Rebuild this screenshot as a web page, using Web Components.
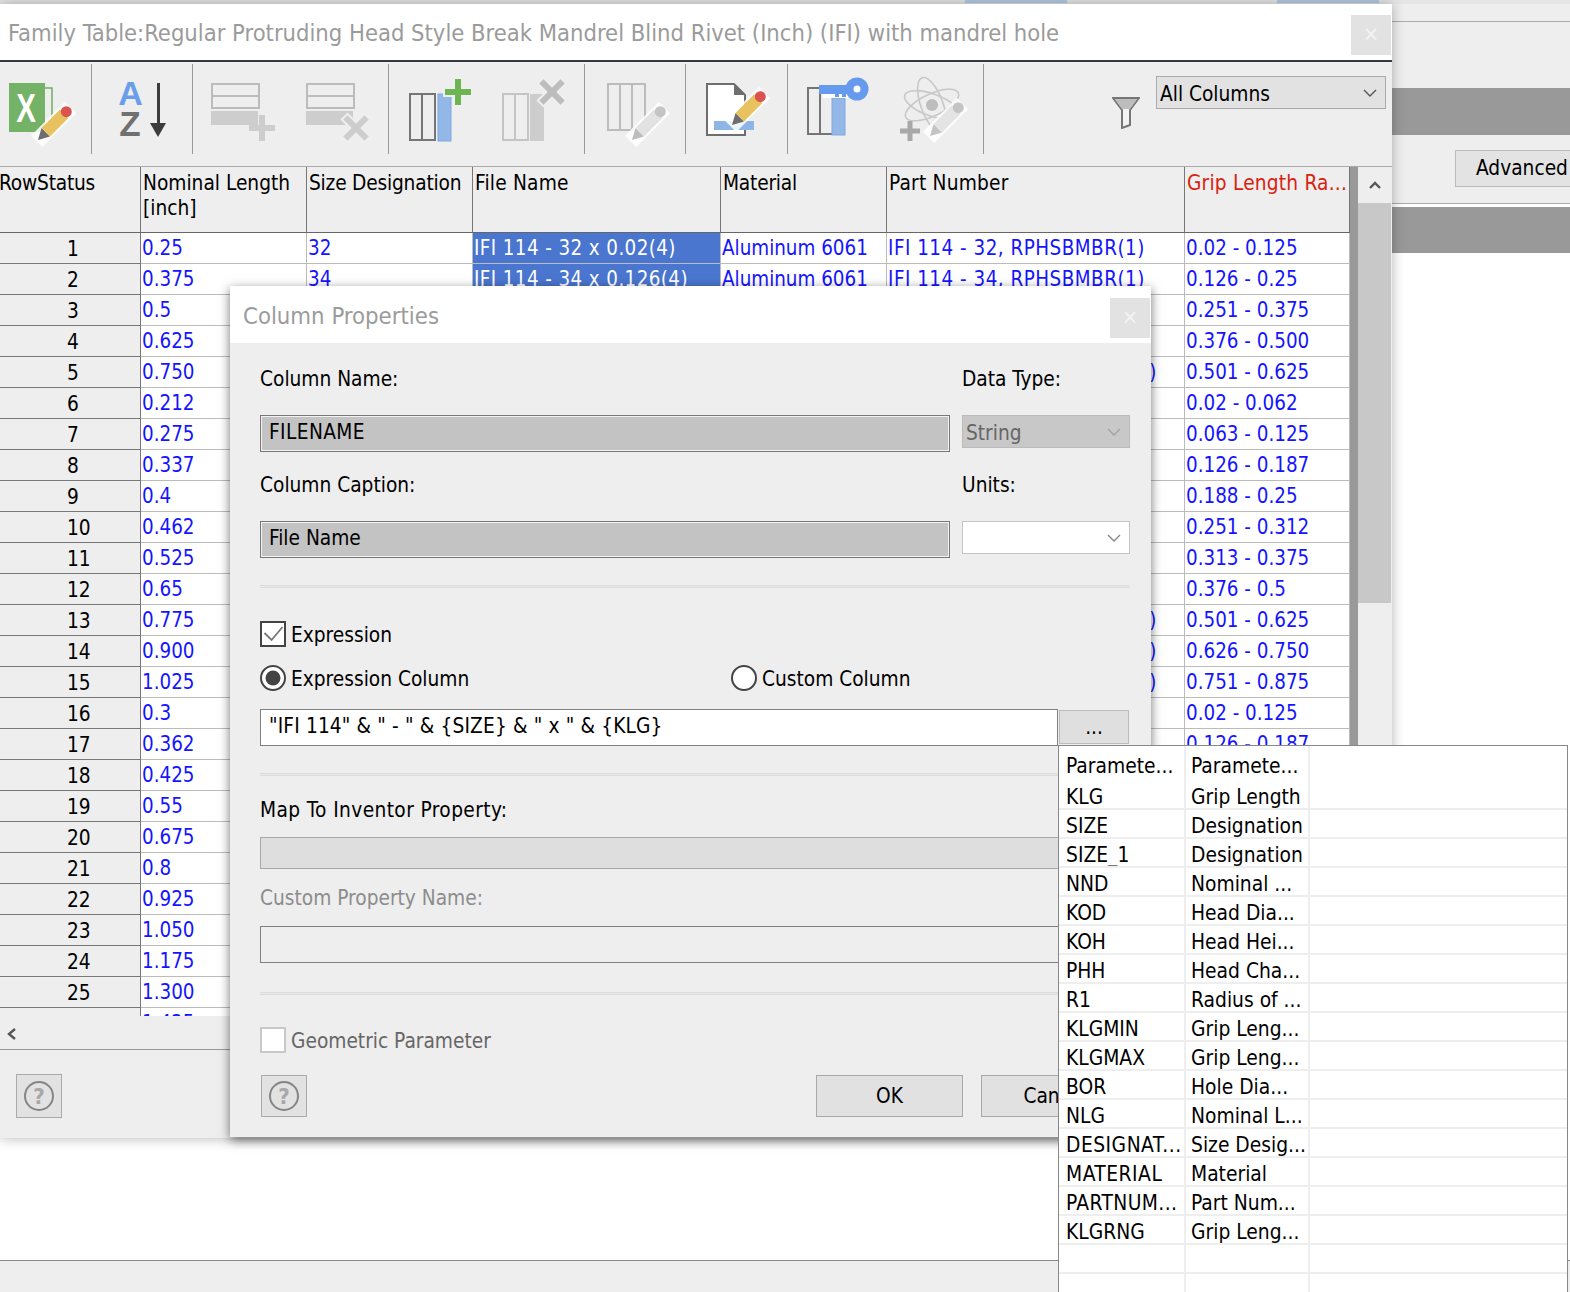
<!DOCTYPE html>
<html>
<head>
<meta charset="utf-8">
<style>
  html, body { margin: 0; padding: 0; background: #fff; overflow: hidden; }
  body { font-family: "DejaVu Sans Condensed", "DejaVu Sans", sans-serif; font-stretch: condensed; font-size: 20.7px; color: #000; }
</style>
</head>
<body>
<desktop-scene>
  <back-window></back-window>
  <family-window></family-window>
  <column-dialog></column-dialog>
  <param-popup></param-popup>
</desktop-scene>

<script>
const TITLE = 'Family Table:Regular Protruding Head Style Break Mandrel Blind Rivet (Inch) (IFI) with mandrel hole';

const NOMINAL = ['0.25','0.375','0.5','0.625','0.750','0.212','0.275','0.337','0.4','0.462','0.525','0.65','0.775','0.900','1.025','0.3','0.362','0.425','0.55','0.675','0.8','0.925','1.050','1.175','1.300','1.425'];
const GRIP = ['0.02 - 0.125','0.126 - 0.25','0.251 - 0.375','0.376 - 0.500','0.501 - 0.625','0.02 - 0.062','0.063 - 0.125','0.126 - 0.187','0.188 - 0.25','0.251 - 0.312','0.313 - 0.375','0.376 - 0.5','0.501 - 0.625','0.626 - 0.750','0.751 - 0.875','0.02 - 0.125','0.126 - 0.187'];
// third value: letter spacing for the capital heavy names
const PARAMS = [['KLG','Grip Length'],['SIZE','Designation'],['SIZE_1','Designation'],['NND','Nominal ...'],['KOD','Head Dia...'],['KOH','Head Hei...'],['PHH','Head Cha...'],['R1','Radius of ...'],['KLGMIN','Grip Leng...'],['KLGMAX','Grip Leng...'],['BOR','Hole Dia...'],['NLG','Nominal L...'],['DESIGNAT...','Size Desig...',.5],['MATERIAL','Material',.5],['PARTNUM...','Part Num...',.4],['KLGRNG','Grip Leng...'],['',''],['','']];

const CHEVRON = (color) => `<svg width="16" height="10" viewBox="0 0 16 10"><polyline points="2,2 8,8 14,2" fill="none" stroke="${color}" stroke-width="1.4"/></svg>`;
const HELP = `<svg width="32" height="32" viewBox="0 0 32 32"><circle cx="16" cy="16" r="14" fill="none" stroke="#858585" stroke-width="2"/><text x="16" y="24" text-anchor="middle" font-size="22" font-weight="bold" fill="#a8a8a8">?</text></svg>`;

// pencil drawn along the diagonal, from tip (x,y) up to the right
function pencil(x, y, body, tip, end) {
    return `<g transform="translate(${x} ${y}) rotate(-45)">
        <rect x="-2" y="-8" width="48" height="16" fill="#fff" opacity=".85"/>
        <polygon points="0,0 11,-6 11,6" fill="${tip}"/>
        <rect x="11" y="-6" width="26" height="12" fill="${body}"/>
        <circle cx="40" cy="0" r="5.5" fill="${end}"/>
    </g>`;
}

function rowIcon(x, mark) {
    return `<rect x="${x+1}" y="84" width="47" height="24" fill="none" stroke="#bcbcbc" stroke-width="2"/>
        <line x1="${x}" y1="96" x2="${x+48}" y2="96" stroke="#bcbcbc" stroke-width="2"/>
        <rect x="${x}" y="111" width="47" height="14" fill="#cdcdcd"/>${mark}`;
}
function plusMark(cx, cy, color, size, w) {
    return `<rect x="${cx-size/2}" y="${cy-w/2}" width="${size}" height="${w}" fill="${color}"/><rect x="${cx-w/2}" y="${cy-size/2}" width="${w}" height="${size}" fill="${color}"/>`;
}
function crossMark(cx, cy, color) {
    return `<g transform="rotate(45 ${cx} ${cy})">${plusMark(cx, cy, '#efefef', 34, 10)}${plusMark(cx, cy, color, 30, 6)}</g>`;
}

const ICONS = [
    [0, 91, `<rect x="10" y="88" width="42" height="40" fill="none" stroke="#6fae62" stroke-width="1.5"/><rect x="9" y="83" width="36" height="49" fill="#74b267"/>
        <text transform="translate(26 122) scale(.72 1)" text-anchor="middle" font-size="41" font-weight="bold" fill="#fff" font-family="Liberation Sans, sans-serif">X</text>${pencil(38, 140, '#e8c25f', '#6d6d6d', '#d9534f')}`],
    [92, 100, `<text x="130.5" y="105" text-anchor="middle" font-size="34" font-weight="bold" fill="#6a9eea" font-family="Liberation Sans, sans-serif">A</text>
        <text x="130" y="136" text-anchor="middle" font-size="35" font-weight="bold" fill="#707070" font-family="Liberation Sans, sans-serif">Z</text>
        <rect x="157" y="83" width="3" height="42" fill="#3c3c3c"/><polygon points="150,123 166,123 158,137" fill="#3c3c3c"/>`],
    [193, 97, rowIcon(211, plusMark(262, 128, '#cdcdcd', 26, 6))],
    [290, 98, rowIcon(306, crossMark(356, 128, '#cdcdcd'))],
    [389, 97, `<rect x="410" y="94" width="25" height="46" fill="none" stroke="#757575" stroke-width="2"/><line x1="422" y1="94" x2="422" y2="140" stroke="#757575" stroke-width="2"/>
        <rect x="438" y="94" width="13" height="47" fill="#93b8e8" stroke="#7fa8df"/>${plusMark(458, 92, '#efefef', 30, 10)}${plusMark(458, 92, '#6cb552', 26, 6)}`],
    [486, 98, `<rect x="503" y="94" width="25" height="46" fill="none" stroke="#c4c4c4" stroke-width="2"/><line x1="515" y1="94" x2="515" y2="140" stroke="#c4c4c4" stroke-width="2"/>
        <rect x="530" y="94" width="14" height="47" fill="#cdcdcd"/>${crossMark(552, 92, '#bdbdbd')}`],
    [585, 100, `<rect x="608" y="84" width="37" height="46" fill="none" stroke="#bcbcbc" stroke-width="2"/><line x1="620" y1="84" x2="620" y2="130" stroke="#bcbcbc" stroke-width="2"/><line x1="632" y1="84" x2="632" y2="130" stroke="#bcbcbc" stroke-width="2"/>
        ${pencil(632, 140, '#e2e2e2', '#bdbdbd', '#c4c4c4')}`],
    [686, 101, `<polygon points="707,84 734,84 745,95 745,135 707,135" fill="#fff" stroke="#6e6e6e" stroke-width="2"/><polygon points="734,84 745,95 734,95" fill="#6e6e6e"/>
        <rect x="714" y="121" width="40" height="9" fill="#8fb4e6"/>${pencil(732, 125, '#e8c25f', '#6d6d6d', '#d9534f')}`],
    [788, 97, `<polyline points="832,88 808,88 808,134 832,134" fill="none" stroke="#757575" stroke-width="2"/><line x1="820" y1="88" x2="820" y2="134" stroke="#757575" stroke-width="2"/>
        <rect x="832" y="98" width="13" height="37" fill="#93b8e8" stroke="#7fa8df"/>
        <rect x="819" y="85" width="34" height="9" fill="#659aec"/><rect x="823" y="94" width="25" height="4" fill="#fff"/><rect x="835" y="94" width="4" height="3" fill="#659aec"/><rect x="842" y="94" width="4" height="3" fill="#659aec"/>
        <circle cx="857" cy="89" r="11.5" fill="#659aec"/><circle cx="857" cy="89" r="3.5" fill="#fff"/>`],
    [885, 98, `<g fill="none" stroke="#c8c8c8" stroke-width="1.6"><ellipse cx="932" cy="105" rx="29" ry="11" transform="rotate(20 932 105)"/><ellipse cx="932" cy="105" rx="29" ry="11" transform="rotate(70 932 105)"/><ellipse cx="932" cy="105" rx="29" ry="11" transform="rotate(-25 932 105)"/></g>
        <circle cx="932" cy="105" r="6" fill="#bdbdbd"/>${pencil(930, 136, '#e4e4e4', '#c4c4c4', '#c4c4c4')}${plusMark(910, 131, '#a8a8a8', 20, 5)}`]
];

class DesktopScene extends HTMLElement {
    constructor() {
        super();
        this.attachShadow({ mode: 'open' }).innerHTML = `
            <style>
                :host { display: block; position: relative; width: 1570px; height: 1292px; overflow: hidden; background: #fff; }
            </style>
            <slot></slot>`;
    }
}

// what is left of the application behind the family table
class BackWindow extends HTMLElement {
    constructor() {
        super();
        this.attachShadow({ mode: 'open' }).innerHTML = `
            <style>
                :host { display: flex; flex-direction: column; height: 1292px; background: #fff; }
                .strip { height: 4px; display: flex; background: #e6e6e6; }
                .tab { height: 3px; background: #b4cbe8; }
                .top { height: 17px; background: #eee; border-bottom: 1px solid #aaa; }
                .gap { height: 66px; background: #eee; }
                .band { background: #999; }
                .mid { height: 69px; background: #eee; display: flex; align-items: flex-start; padding-left: 1455px; box-sizing: border-box; border-bottom: 1px solid #aaa; }
                .adv { margin-top: 15px; flex: none; width: 140px; height: 37px; box-sizing: border-box; border: 1px solid #bbb; background: #e3e3e3; padding-left: 20px; line-height: 35px; }
                .fill { flex: 1; }
                .foot { height: 32px; box-sizing: border-box; background: #eee; border-top: 1px solid #888; }
            </style>
            <div class="strip"><span style="width:965px"></span><span class="tab" style="width:102px"></span><span style="width:210px"></span><span class="tab" style="width:102px"></span></div>
            <div class="top"></div>
            <div class="gap"></div>
            <div class="band" style="height:47px"></div>
            <div class="mid"><span class="adv">Advanced</span></div>
            <div style="height:3px;background:#fff"></div>
            <div class="band" style="height:46px"></div>
            <div class="fill"></div>
            <div class="foot"></div>`;
    }
}

class ToolIcon extends HTMLElement {
    constructor() {
        super();
        this.attachShadow({ mode: 'open' });
    }
    connectedCallback() {
        const [left, width, art] = ICONS[Number(this.getAttribute('icon'))];
        this.shadowRoot.innerHTML = `
            <style>
                :host { display: block; flex: none; width: ${width}px; height: 90px; }
                svg { display: block; }
            </style>
            <svg width="${width}" height="90" viewBox="${left} 64 ${width} 90">${art}</svg>`;
    }
}

class ToolBar extends HTMLElement {
    constructor() {
        super();
        const sep = '<i class="sep"></i>';
        this.attachShadow({ mode: 'open' }).innerHTML = `
            <style>
                :host { display: flex; flex: none; height: 105px; padding-top: 2px; box-sizing: border-box; background: #eee; border-bottom: 1px solid #aaa; align-items: flex-start; }
                .sep { flex: none; width: 1px; height: 90px; background: #9a9a9a; }
                .filter { margin: 33px 0 0 128px; flex: none; }
                .select { margin: 12px 0 0 16px; flex: none; width: 230px; height: 33px; box-sizing: border-box; border: 1px solid #aaa; background: #e2e2e2; display: flex; align-items: center; justify-content: space-between; padding: 2px 7px 0 3px; }
                .select svg { margin-top: -2px; }
            </style>
            <tool-icon icon="0"></tool-icon>${sep}
            <tool-icon icon="1"></tool-icon>${sep}
            <tool-icon icon="2"></tool-icon><tool-icon icon="3"></tool-icon>${sep}
            <tool-icon icon="4"></tool-icon><tool-icon icon="5"></tool-icon>${sep}
            <tool-icon icon="6"></tool-icon>${sep}
            <tool-icon icon="7"></tool-icon>${sep}
            <tool-icon icon="8"></tool-icon><tool-icon icon="9"></tool-icon>${sep}
            <svg class="filter" width="28" height="32" viewBox="0 0 28 32"><polygon points="1,1 27,1 18,13 18,28 10,31 10,13" fill="#f3f3f3" stroke="#767676" stroke-width="2"/><polygon points="3,2 25,2 18,12 10,12" fill="#bdbdbd"/></svg>
            <div class="select"><span>All Columns</span>${CHEVRON('#555')}</div>`;
    }
}

class FamilyGrid extends HTMLElement {
    constructor() {
        super();
        const heads = ['RowStatus','Nominal Length<br>[inch]','Size Designation','File Name','Material','Part Number','Grip Length Ra...'];
        const headCls = ['first', '', 'tight', 'wide', 'tight', 'wide', 'red wide'];
        let cells = heads.map((h, i) => `<div class="head ${headCls[i]}">${h}</div>`).join('');
        const full = [
            ['32','IFI 114 - 32 x 0.02(4)','Aluminum 6061','IFI 114 - 32, RPHSBMBR(1)'],
            ['34','IFI 114 - 34 x 0.126(4)','Aluminum 6061','IFI 114 - 34, RPHSBMBR(1)']
        ];
        // the part number tails that stick out beside the dialog
        const tails = [5, 13, 14, 15];
        NOMINAL.forEach((n, i) => {
            const row = full[i] || ['', '', '', ''];
            const tail = tails.includes(i + 1) ? ')' : '';
            cells += `<div class="num">${i < 25 ? i + 1 : ''}</div><div class="cell">${n}</div><div class="cell">${row[0]}</div>
                <div class="cell ${row[1] ? 'sel' : ''}">${row[1]}</div><div class="cell">${row[2]}</div>
                <div class="cell part ${tail ? 'tail' : ''}">${row[3] || tail}</div><div class="cell">${GRIP[i] || ''}</div>`;
        });
        this.attachShadow({ mode: 'open' }).innerHTML = `
            <style>
                :host { display: block; flex: none; width: 1350px; height: 849px; overflow: hidden; background: #fff; }
                .grid { display: grid; grid-template-columns: 141px 166px 166px 248px 166px 298px 165px; grid-template-rows: 66px; grid-auto-rows: 31px; }
                .head { background: #eee; border-right: 1px solid #777; border-bottom: 1px solid #666; padding: 4px 0 0 2px; line-height: 25px; box-sizing: border-box; white-space: nowrap; overflow: hidden; }
                .head.first { padding-left: 0; text-indent: -1px; letter-spacing: -.2px; }
                .head.tight { letter-spacing: -.2px; }
                .head.wide { letter-spacing: .2px; }
                .red { color: #d9230f; }
                .num { background: #eee; border-right: 1px solid #777; border-bottom: 1px solid #777; box-sizing: border-box; padding-left: 67px; line-height: 33px; }
                .cell { font-size: 20.4px; color: #1414ff; border-right: 1px solid #bbb; border-bottom: 1px solid #bbb; box-sizing: border-box; padding-left: 1px; line-height: 31px; white-space: nowrap; overflow: hidden; background: #fff; }
                .part { letter-spacing: .5px; }
                .sel { background: #4a76cf; color: #fff; letter-spacing: .4px; }
                .tail { text-align: right; padding-right: 27px; }
            </style>
            <div class="grid">${cells}</div>`;
    }
}

class VScroll extends HTMLElement {
    constructor() {
        super();
        this.attachShadow({ mode: 'open' }).innerHTML = `
            <style>
                :host { display: flex; flex-direction: column; flex: none; width: 34px; background: #eee; border-left: 8px solid #999; }
                .up { height: 36px; display: flex; align-items: center; justify-content: center; }
                .thumb { width: 33px; height: 400px; background: #c8c8c8; }
            </style>
            <div class="up"><svg width="14" height="10" viewBox="0 0 14 10"><polyline points="2,8 7,3 12,8" fill="none" stroke="#555" stroke-width="2.4"/></svg></div>
            <div class="thumb"></div>`;
    }
}

class HelpButton extends HTMLElement {
    constructor() {
        super();
        this.attachShadow({ mode: 'open' }).innerHTML = `
            <style>
                :host { display: flex; align-items: center; justify-content: center; flex: none; width: 46px; height: 44px; box-sizing: border-box; border: 1px solid #aaa; background: #e2e2e2; }
            </style>${HELP}`;
    }
}

class FamilyWindow extends HTMLElement {
    constructor() {
        super();
        this.attachShadow({ mode: 'open' }).innerHTML = `
            <style>
                :host { position: absolute; left: 0; top: 4px; width: 1392px; height: 1134px; display: flex; flex-direction: column; background: #eee; box-shadow: 0 0 12px rgba(0,0,0,.3); }
                .title { flex: none; height: 56px; background: #fff; display: flex; justify-content: space-between; border-bottom: 2px solid #333a44; }
                .title span { color: #9b9b9b; font-size: 23.55px; padding: 15px 0 0 8px; white-space: nowrap; }
                .close { flex: none; width: 40px; height: 40px; margin-top: 11px; margin-right: 1px; background: #e2e2e2; color: #f4f4f4; font-size: 22px; text-align: center; line-height: 38px; }
                .body { flex: none; display: flex; height: 849px; }
                .hbar { flex: none; height: 34px; box-sizing: border-box; border-bottom: 1px solid #999; padding: 11px 0 0 6px; }
                .foot { flex: 1; padding: 24px 0 0 16px; }
            </style>
            <div class="title"><span>${TITLE}</span><div class="close">×</div></div>
            <tool-bar></tool-bar>
            <div class="body"><family-grid></family-grid><v-scroll></v-scroll></div>
            <div class="hbar"><svg width="12" height="14" viewBox="0 0 12 14" style="display:block"><polyline points="9,2 3,7 9,12" fill="none" stroke="#555" stroke-width="2.4"/></svg></div>
            <div class="foot"><help-button></help-button></div>`;
    }
}

class ColumnDialog extends HTMLElement {
    constructor() {
        super();
        this.attachShadow({ mode: 'open' }).innerHTML = `
            <style>
                :host { position: absolute; left: 230px; top: 286px; width: 921px; height: 851px; display: flex; flex-direction: column; background: #eee; box-shadow: 0 3px 10px rgba(0,0,0,.55); }
                .title { flex: none; height: 57px; background: #fff; display: flex; justify-content: space-between; }
                .title span { color: #9b9b9b; font-size: 23.7px; padding: 16px 0 0 13px; }
                .close { flex: none; width: 40px; height: 40px; margin-top: 12px; margin-right: 1px; background: #e2e2e2; color: #f4f4f4; font-size: 22px; text-align: center; line-height: 38px; }
                .body { flex: 1; display: flex; flex-direction: column; padding: 0 21px 0 30px; }
                .two { display: grid; grid-template-columns: 690px 168px; column-gap: 12px; }
                .lab { height: 30px; line-height: 32px; white-space: nowrap; }
                .off { color: #8c8c8c; }
                .field { height: 37px; box-sizing: border-box; border: 1px solid #777; box-shadow: inset 0 0 0 1px #f2f2f2; background: #c3c3c3; padding-left: 8px; line-height: 33px; }
                .sel { height: 33px; box-sizing: border-box; border: 1px solid #c4c4c4; display: flex; align-items: center; justify-content: space-between; padding: 2px 7px 0 3px; background: #fff; }
                .sel svg { margin-top: -2px; }
                .sel.dis { background: #c8c8c8; color: #666; border-color: #bbb; }
                .rule { height: 3px; box-sizing: border-box; border-top: 1px solid #dcdcdc; border-bottom: 1px solid #dcdcdc; background: #e8e8e8; }
                .check { display: flex; align-items: center; gap: 5px; height: 26px; }
                .check span:last-child { padding-top: 2px; }
                .box { width: 26px; height: 26px; box-sizing: border-box; border: 2px solid #444; background: #fff; flex: none; display: block; }
                .row { display: flex; }
                .radio { flex: none; display: block; }
                .input { flex: none; height: 37px; box-sizing: border-box; border: 1px solid #808080; background: #fff; padding-left: 8px; line-height: 33px; white-space: pre; letter-spacing: .15px; }
                .dots { flex: none; width: 70px; height: 34px; margin: 1px 0 0 1px; box-sizing: border-box; border: 1px solid #bbb; background: #dfdfdf; text-align: center; line-height: 32px; }
                .bottom { display: flex; margin-top: 22px; padding-left: 1px; }
                .btn { flex: none; height: 42px; box-sizing: border-box; border: 1px solid #a8a8a8; background: #e1e1e1; text-align: center; line-height: 41px; }
            </style>
            <div class="title"><span>Column Properties</span><div class="close">×</div></div>
            <div class="body">
                <div class="two" style="margin-top:20px">
                    <div class="lab">Column Name:</div><div class="lab">Data Type:</div>
                </div>
                <div class="two" style="margin-top:22px">
                    <div class="field" style="letter-spacing:.4px">FILENAME</div>
                    <div class="sel dis"><span>String</span>${CHEVRON('#a2a2a2')}</div>
                </div>
                <div class="two" style="margin-top:17px">
                    <div class="lab">Column Caption:</div><div class="lab">Units:</div>
                </div>
                <div class="two" style="margin-top:22px">
                    <div class="field">File Name</div>
                    <div class="sel"><span></span>${CHEVRON('#888')}</div>
                </div>
                <div class="rule" style="margin-top:27px"></div>
                <div class="check" style="margin-top:33px">
                    <svg class="box" viewBox="0 0 22 22"><polyline points="2.5,10 9.6,17 20.5,4" fill="none" stroke="#777" stroke-width="1.8"/></svg><span>Expression</span>
                </div>
                <div class="row" style="margin-top:18px">
                    <div class="check" style="width:471px">
                        <svg class="radio" width="26" height="26" viewBox="0 0 26 26"><circle cx="13" cy="13" r="12" fill="#fff" stroke="#444" stroke-width="2"/><circle cx="13" cy="13" r="7.5" fill="#444"/></svg><span>Expression Column</span>
                    </div>
                    <div class="check">
                        <svg class="radio" width="26" height="26" viewBox="0 0 26 26"><circle cx="13" cy="13" r="12" fill="#fff" stroke="#444" stroke-width="2"/></svg><span>Custom Column</span>
                    </div>
                </div>
                <div class="row" style="margin-top:18px">
                    <div class="input" style="width:798px">"IFI 114" &amp; " - " &amp; {SIZE} &amp; " x " &amp; {KLG}</div>
                    <div class="dots">...</div>
                </div>
                <div class="rule" style="margin-top:27px"></div>
                <div class="lab" style="margin-top:18px;letter-spacing:.4px">Map To Inventor Property:</div>
                <div class="sel" style="margin-top:13px;background:#dedede;border-color:#a8a8a8;height:32px"></div>
                <div class="lab off" style="margin-top:13px">Custom Property Name:</div>
                <div class="input" style="margin-top:14px;background:#eee"></div>
                <div class="rule" style="margin-top:29px"></div>
                <div class="check" style="margin-top:32px">
                    <span class="box" style="border-color:#c8c8c8"></span><span style="color:#666">Geometric Parameter</span>
                </div>
                <div class="bottom">
                    <help-button style="height:42px"></help-button>
                    <div class="btn" style="width:147px;margin-left:509px">OK</div>
                    <div class="btn" style="width:148px;margin-left:18px">Cancel</div>
                </div>
            </div>`;
    }
}

class ParamPopup extends HTMLElement {
    constructor() {
        super();
        const head = `<div class="h">Paramete...</div><div class="h two">Paramete...</div><div class="h blank"></div>`;
        const rows = PARAMS.map(p => `<div class="c" style="letter-spacing:${p[2] || 0}px">${p[0]}</div><div class="c two">${p[1]}</div><div class="c blank"></div>`).join('');
        this.attachShadow({ mode: 'open' }).innerHTML = `
            <style>
                :host { position: absolute; left: 1058px; top: 745px; width: 510px; height: 547px; box-sizing: border-box; border: 1px solid #888; border-bottom: 0; background: #fff; overflow: hidden; font-size: 20.8px; }
                .grid { display: grid; grid-template-columns: 127px 124px 1fr; grid-template-rows: 35px; grid-auto-rows: 29px; }
                .h { border-right: 2px solid #eee; padding-left: 7px; line-height: 40px; box-sizing: border-box; white-space: nowrap; }
                .c { border-right: 2px solid #eee; border-bottom: 2px solid #eee; padding-left: 7px; line-height: 33px; box-sizing: border-box; white-space: nowrap; overflow: hidden; }
                .two { padding-left: 5px; }
                .blank { border-right: 0; }
            </style>
            <div class="grid">${head}${rows}</div>`;
    }
}

customElements.define('desktop-scene', DesktopScene);
customElements.define('back-window', BackWindow);
customElements.define('tool-icon', ToolIcon);
customElements.define('tool-bar', ToolBar);
customElements.define('family-grid', FamilyGrid);
customElements.define('v-scroll', VScroll);
customElements.define('help-button', HelpButton);
customElements.define('family-window', FamilyWindow);
customElements.define('column-dialog', ColumnDialog);
customElements.define('param-popup', ParamPopup);
</script>
</body>
</html>
